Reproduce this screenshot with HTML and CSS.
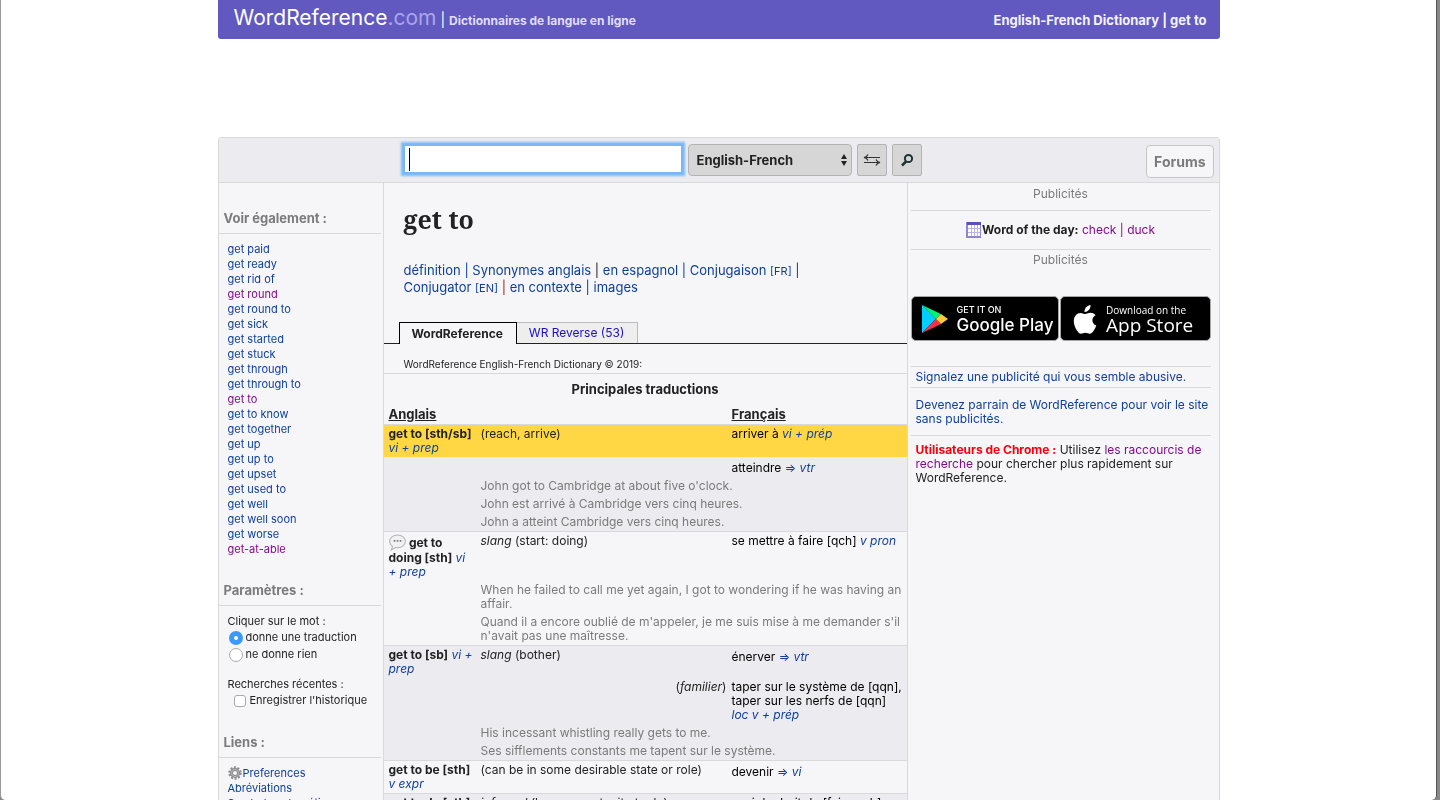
FILE: index.html
```html
<!DOCTYPE html>
<html lang="fr">
<head>
  <meta charset="UTF-8" />
  <meta name="viewport" content="width=device-width, initial-scale=1.0"/>
  <title>get to - English-French Dictionary WordReference.com</title>
  <link rel="stylesheet" href="styles.css">
</head>
<body>
  <div class="window">
    <header class="header">
      <div class="logo"><a href="#">WordReference<span class="dotcom">.com</span></a> | <span class="tagline">Dictionnaires de langue en ligne</span></div>
      <div class="page-name">English-French Dictionary | get to</div>
    </header>

    <div class="container">
      <form class="search-bar">
        <div class="search">
          <input class="search-input" type="text" aria-label="Rechercher" autofocus />
          <div class="select-wrap">
            <select class="lang" aria-label="Dictionnaire">
              <option>English-French</option>
              <option>French-English</option>
            </select>
            <svg class="select-arrows" viewBox="0 0 6 12" width="6" height="12"><path d="M3 0l3 5H0zM3 12l3-5H0z" fill="#222"/></svg>
          </div>
          <button class="icon-btn" type="button" aria-label="Inverser">
            <svg viewBox="0 0 18 14" width="18" height="14" fill="none" stroke="#333" stroke-width="1.2"><path d="M17 4.500H2M5 1.500Q4 4 1 4.500 4 5 5 7.500M1 9.500h15M13 6.500q1 2.500 4 3-3 .5-4 3"/></svg>
          </button>
          <button class="icon-btn" type="submit" aria-label="Chercher">
            <svg viewBox="0 0 14 14" width="14" height="14" fill="none" stroke="#1c3535"><circle cx="8.500" cy="5.500" r="3.600" stroke-width="2"/><path d="M6 8.500L2 12.500" stroke-width="2.500"/></svg>
          </button>
        </div>
        <a class="forums" href="#">Forums</a>
      </form>

      <div class="columns">
        <aside class="left">
          <h3>Voir également :</h3>
          <ul class="links">
            <li><a href="#">get paid</a></li>
            <li><a href="#">get ready</a></li>
            <li><a href="#">get rid of</a></li>
            <li><a class="visited" href="#">get round</a></li>
            <li><a href="#">get round to</a></li>
            <li><a href="#">get sick</a></li>
            <li><a href="#">get started</a></li>
            <li><a href="#">get stuck</a></li>
            <li><a href="#">get through</a></li>
            <li><a href="#">get through to</a></li>
            <li><a class="visited" href="#">get to</a></li>
            <li><a href="#">get to know</a></li>
            <li><a href="#">get together</a></li>
            <li><a href="#">get up</a></li>
            <li><a href="#">get up to</a></li>
            <li><a href="#">get upset</a></li>
            <li><a href="#">get used to</a></li>
            <li><a href="#">get well</a></li>
            <li><a href="#">get well soon</a></li>
            <li><a href="#">get worse</a></li>
            <li><a class="visited" href="#">get-at-able</a></li>
          </ul>

          <h3>Paramètres :</h3>
          <div class="settings">
            <p>Cliquer sur le mot :</p>
            <label class="option"><input type="radio" name="click" checked />donne une traduction</label>
            <label class="option"><input type="radio" name="click" />ne donne rien</label>
            <p class="recent">Recherches récentes :</p>
            <label class="option history"><input type="checkbox" />Enregistrer l'historique</label>
          </div>

          <h3>Liens :</h3>
          <ul class="links">
            <li><a class="prefs" href="#"><svg viewBox="0 0 14 14" width="14" height="14" fill="none" stroke="#8a8a8a"><circle cx="7" cy="7" r="5.700" stroke-width="2" stroke-dasharray="2 1.580"/><circle cx="7" cy="7" r="3.600" stroke-width="3"/><circle cx="7" cy="7" r="3.600" stroke="#b5b5b5" stroke-width="1"/></svg>Preferences</a></li>
            <li><a href="#">Abréviations</a></li>
            <li><a href="#">Symboles phonétiques</a></li>
          </ul>
        </aside>

        <main class="center">
          <h1>get to</h1>
          <p class="more">
            <a href="#">définition</a> <i>|</i> <a href="#">Synonymes anglais</a> | <a href="#">en espagnol</a> <i>|</i> <a href="#">Conjugaison <small>[FR]</small></a> <i>|</i>
            <a href="#">Conjugator <small>[EN]</small></a> <b>|</b> <a href="#">en contexte</a> <i>|</i> <a href="#">images</a>
          </p>

          <nav class="tabs">
            <a class="tab active" href="#">WordReference</a>
            <a class="tab" href="#">WR Reverse (53)</a>
          </nav>
          <p class="copyright">WordReference English-French Dictionary © 2019:</p>

          <table class="wrd">
            <colgroup>
              <col class="col-from">
              <col class="col-sense">
              <col>
            </colgroup>
            <tbody>
              <tr><th class="title" colspan="3">Principales traductions</th></tr>
              <tr class="lang-heads"><th>Anglais</th><th></th><th>Français</th></tr>
            </tbody>
            <tbody class="entry even">
              <tr class="selected">
                <td><strong>get to [sth/sb]</strong> <a class="pos" href="#">vi + prep</a></td>
                <td>(reach, arrive)</td>
                <td class="to">arriver à <a class="pos" href="#">vi + prép</a></td>
              </tr>
              <tr>
                <td></td>
                <td></td>
                <td class="to conj">atteindre <a class="pos" href="#"><span class="arrow">⇒</span> vtr</a></td>
              </tr>
              <tr><td></td><td class="example" colspan="2">John got to Cambridge at about five o'clock.</td></tr>
              <tr><td></td><td class="example" colspan="2">John est arrivé à Cambridge vers cinq heures.</td></tr>
              <tr><td></td><td class="example" colspan="2">John a atteint Cambridge vers cinq heures.</td></tr>
            </tbody>
            <tbody class="entry">
              <tr>
                <td><svg class="bubble" viewBox="0 0 16 16" width="17" height="17"><path d="M8 1C3.800 1 .6 3.500.6 6.900c0 2 1 3.600 2.700 4.700L2.200 15l4-2.200c.6.1 1.200.1 1.800.1 4.200 0 7.400-2.600 7.400-6S12.200 1 8 1z" fill="#f1f1f1" stroke="#b4b4b4"/><path d="M4.500 6.500h1.500M7.300 6.500h1.500M10.100 6.500h1.500" stroke="#777" stroke-width="1.500"/></svg> <strong>get to doing [sth]</strong> <a class="pos" href="#">vi + prep</a></td>
                <td><i>slang</i> (start: doing)</td>
                <td class="to">se mettre à faire [qch] <a class="pos" href="#">v pron</a></td>
              </tr>
              <tr><td></td><td class="example" colspan="2">When he failed to call me yet again, I got to wondering if he was having an affair.</td></tr>
              <tr><td></td><td class="example" colspan="2">Quand il a encore oublié de m'appeler, je me suis mise à me demander s'il n'avait pas une maîtresse.</td></tr>
            </tbody>
            <tbody class="entry even">
              <tr>
                <td><strong>get to [sb]</strong> <a class="pos" href="#">vi + prep</a></td>
                <td><i>slang</i> (bother)</td>
                <td class="to conj">énerver <a class="pos" href="#"><span class="arrow">⇒</span> vtr</a></td>
              </tr>
              <tr>
                <td></td>
                <td class="register">(<i>familier</i>)</td>
                <td class="to">taper sur le système de [qqn], taper sur les nerfs de [qqn] <a class="pos" href="#">loc v + prép</a></td>
              </tr>
              <tr><td></td><td class="example" colspan="2">His incessant whistling really gets to me.</td></tr>
              <tr><td></td><td class="example" colspan="2">Ses sifflements constants me tapent sur le système.</td></tr>
            </tbody>
            <tbody class="entry">
              <tr>
                <td><strong>get to be [sth]</strong> <a class="pos" href="#">v expr</a></td>
                <td>(can be in some desirable state or role)</td>
                <td class="to conj">devenir <a class="pos" href="#"><span class="arrow">⇒</span> vi</a></td>
              </tr>
            </tbody>
            <tbody class="entry even">
              <tr>
                <td><strong>get to do [sth]</strong> <a class="pos" href="#">v expr</a></td>
                <td><i>informal</i> (have opportunity to do)</td>
                <td class="to">avoir le droit de [faire qch]</td>
              </tr>
            </tbody>
          </table>
        </main>

        <aside class="right">
          <p class="ad">Publicités</p>
          <p class="word-day">
            <svg viewBox="0 0 16 18" width="16" height="18"><path d="M0 1h15v16H0z" fill="#8f88cf"/><path d="M1 1h14v3H1z" fill="#5a50bb"/><path d="M2 4h12v11H2z" fill="#fff"/><path d="M5.500 4v11M8.500 4v11M11.500 4v11M2 7.500h12M2 11.500h12" stroke="#b9b4e4"/></svg><strong>Word of the day:</strong>&nbsp;<a class="visited" href="#">check | duck</a>
          </p>
          <p class="ad second">Publicités</p>
          <div class="stores">
            <a class="store google" href="#">
              <svg viewBox="0 0 26 30" width="26" height="30"><path d="M0 1v28l14-14z" fill="#00cfff"/><path d="M0 1l14 14 5-5z" fill="#00ef76"/><path d="M0 29l14-14 5 5z" fill="#f4304a"/><path d="M19 10l7 5-7 5-5-5z" fill="#ffc93a"/></svg>
              <span><small>GET IT ON</small>Google Play</span>
            </a>
            <a class="store apple" href="#">
              <svg viewBox="0 0 24 30" width="24" height="30" fill="#fff"><path d="M17.500 1c.2 2-.6 3.700-1.700 5-1.200 1.300-2.700 2.100-4.300 2-.2-1.900.7-3.600 1.700-4.700C14.300 2.100 16 1.200 17.500 1z"/><path d="M22.500 11.200c-2 1.200-3.100 2.900-3.100 5 0 2.500 1.600 4.500 3.900 5.300-.7 2.200-1.700 4-3 5.800-1 1.400-2.100 2.400-3.600 2.400-1.600 0-2.300-.9-4.300-.9s-2.800.9-4.300.9c-1.600 0-2.700-1.200-3.800-2.800C2.200 24.200.8 20.600.8 17.200c0-5.200 3.200-8.300 6.600-8.300 1.900 0 3.400 1.200 4.700 1.200 1.200 0 3-1.300 5.200-1.300 2 0 3.900.8 5.200 2.400z"/></svg>
              <span><small>Download on the</small>App Store</span>
            </a>
          </div>
          <p class="report"><a href="#">Signalez une publicité qui vous semble abusive.</a></p>
          <p class="sponsor"><a href="#">Devenez parrain de WordReference pour voir le site sans publicités.</a></p>
          <p class="chrome"><strong>Utilisateurs de Chrome :</strong> Utilisez <a class="visited" href="#">les raccourcis de recherche</a> pour chercher plus rapidement sur WordReference.</p>
        </aside>
      </div>
    </div>
  </div>
</body>
</html>
```
FILE: styles.css
```css
* {
  box-sizing: border-box;
}

html {
  background: #888;
}

body {
  margin: 0;
  font-family: Inter, "Liberation Sans", sans-serif;
  font-size: 12px;
  line-height: 14px;
  color: #222;
}

h1, h3, p, ul {
  margin: 0;
  padding: 0;
}

a {
  color: #0d3f9b;
  text-decoration: none;
}

a.visited {
  color: #800b8c;
}

.window {
  height: 100vh;
  margin: 0 3px 0 0;
  overflow: hidden;
  background: #fff;
  border-left: 1px solid #999;
  border-right: 1px solid #555;
  border-radius: 0 0 5px 5px;
}

/* top banner */
.header {
  display: flex;
  justify-content: space-between;
  align-items: center;
  max-width: 1002px;
  height: 39px;
  margin: 0 auto 98px;
  padding: 0 13px 0 16px;
  background: #6159c0;
  border-radius: 0 0 3px 3px;
  color: #fff;
}

.logo {
  font-size: 14px;
  line-height: 24px;
}

.logo a {
  font-size: 21px;
  color: #fff;
}

.logo .dotcom {
  color: #aaa5e8;
}

.tagline {
  font-size: 12px;
  font-weight: bold;
  color: #e0def8;
}

.page-name {
  font-size: 13px;
  font-weight: bold;
  color: #f4f3ff;
}

.container {
  max-width: 1002px;
  margin: 0 auto;
  border: 1px solid #d9d9dc;
  border-radius: 3px;
  background: #f6f6f9;
}

/* search */
.search-bar {
  display: flex;
  justify-content: space-between;
  height: 45px;
  padding: 6px 5px 0 184px;
  background: #ebebf0;
  border-bottom: 1px solid #d9d9dc;
}

.search {
  display: flex;
  gap: 5px;
}

.search-input {
  width: 280px;
  height: 30px;
  padding: 0 5px;
  border: 1px solid #6fb1f0;
  outline: none;
  box-shadow: 0 0 2px 2px #7db9f5;
  font: 20px Inter, sans-serif;
  background: #fff;
}

.search-input:focus {
  border: 2px solid #7db7f3;
  caret-color: transparent;
  background: #fff linear-gradient(#000, #000) 4px center / 1px 23px no-repeat;
}

.select-wrap {
  position: relative;
}

.lang {
  appearance: none;
  width: 164px;
  height: 32px;
  padding: 0 8px;
  background: #d6d6d6;
  border: 1px solid #b4b4b4;
  border-radius: 4px;
  font: bold 13px Inter, sans-serif;
  color: #222;
}

.select-arrows {
  position: absolute;
  right: 5px;
  top: 10px;
  pointer-events: none;
}

.icon-btn {
  display: flex;
  align-items: center;
  justify-content: center;
  width: 30px;
  height: 32px;
  padding: 0;
  background: #d6d6d6;
  border: 1px solid #b4b4b4;
  border-radius: 2px;
}

.forums {
  height: 33px;
  margin-top: 1px;
  padding: 0 7px;
  background: #f6f6f9;
  border: 1px solid #c6c6c8;
  border-radius: 4px;
  font-size: 14px;
  font-weight: bold;
  line-height: 31px;
  color: #7b7b7b;
}

.columns {
  display: grid;
  grid-template-columns: 164px 1fr 311px;
}

/* left column */
.left {
  padding-top: 2px;
  font-size: 11px;
  line-height: 15px;
}

.left h3 {
  margin: 25px 2px 8px 0;
  padding: 0 0 7px 5px;
  border-bottom: 1px solid #d9d9dc;
  font-size: 13px;
  line-height: 16px;
  color: #7b7b7b;
}

.links {
  padding-left: 9px;
  list-style: none;
}

.prefs svg {
  vertical-align: -3px;
  margin-right: 1px;
}

.settings {
  padding-left: 9px;
}

.option {
  display: flex;
  align-items: center;
  height: 17px;
}

.option input {
  appearance: none;
  width: 14px;
  height: 14px;
  margin: 0 3px 0 1px;
  border: 1px solid #aaa;
  border-radius: 50%;
  background: #fff;
}

.option input:checked {
  border: 5px solid #3b99fc;
}

.recent {
  margin-top: 14px;
}

.history input {
  width: 12px;
  height: 12px;
  margin: 0 4px 0 6px;
  border-radius: 3px;
}

/* translations */
.center {
  border-left: 1px solid #d9d9dc;
  border-right: 1px solid #d9d9dc;
}

h1 {
  padding: 20px 20px 0;
  font-family: "Noto Serif", "Liberation Serif", serif;
  font-size: 25px;
  line-height: 32px;
}

.more {
  padding: 27px 100px 0 20px;
  font-size: 13px;
  line-height: 17px;
}

.more i {
  color: #0d3f9b;
  font-style: normal;
}

.more b {
  color: #a3261b;
  font-weight: normal;
}

.more small {
  font-size: 11px;
  line-height: 11px;
}

.tabs {
  display: flex;
  align-items: flex-end;
  margin-top: 26px;
  padding-left: 15px;
  border-bottom: 1px solid #222;
}

.tab {
  height: 21px;
  padding: 0 13px 0 12px;
  background: #eee;
  border: 1px solid #bbb;
  border-left: none;
  border-bottom: none;
  line-height: 20px;
  color: #1a0dc4;
}

.tab.active {
  height: 22px;
  margin-bottom: -1px;
  background: #f6f6f9;
  border: 1px solid #000;
  border-bottom: none;
  font-weight: bold;
  line-height: 22px;
  color: #222;
}

.copyright {
  padding: 13px 20px 2px;
  border-bottom: 1px solid #d9d9dc;
  font-size: 10px;
}

.wrd {
  width: 100%;
  table-layout: fixed;
  border-collapse: separate;
  border-spacing: 0;
}

.col-from {
  width: 92px;
}

.col-sense {
  width: 251px;
}

.wrd th {
  padding: 2px 0 2px 5px;
  font-size: 13px;
  line-height: 16px;
  text-align: left;
}

.wrd th.title {
  padding: 7px 0;
  text-align: center;
}

.lang-heads th {
  text-decoration: underline;
}

.wrd td {
  padding: 2px 0 2px 5px;
  vertical-align: top;
}

.entry tr:first-child td {
  border-top: 1px solid #d9d9dc;
}

.even {
  background: #ebebf0;
}

.selected {
  background: #ffd644;
}

.pos {
  font-style: italic;
}

.arrow {
  font-style: normal;
}

.wrd .to {
  color: #000;
}

.wrd .conj {
  padding-top: 4px;
}

.wrd .example {
  padding-right: 2px;
  color: #7b7b7b;
}

.wrd .register {
  text-align: right;
}

.bubble {
  vertical-align: -4px;
}

/* right column */
.right {
  padding: 0 8px 0 3px;
}

.ad {
  padding: 4px 0 9px;
  text-align: center;
  color: #7b7b7b;
}

.word-day {
  display: flex;
  align-items: center;
  justify-content: center;
  height: 40px;
  border-top: 1px solid #d9d9dc;
  border-bottom: 1px solid #d9d9dc;
}

.ad.second {
  padding: 3px 0 29px;
}

.stores {
  display: flex;
  gap: 1px;
  padding-bottom: 25px;
}

.store {
  display: flex;
  align-items: center;
  flex: 1;
  height: 45px;
  padding-left: 10px;
  background: #000;
  border: 1px solid #a6a6a6;
  border-radius: 5px;
  color: #fff;
  font-size: 17px;
  font-weight: 500;
  line-height: 18px;
  white-space: nowrap;
}

.store small {
  display: block;
  font-size: 9px;
  line-height: 12px;
}

.store svg {
  margin-right: 9px;
}

.apple {
  padding-left: 12px;
  font-family: "Open Sans", sans-serif;
  font-size: 19px;
}

.apple small {
  font-size: 10px;
}

.report {
  padding: 3px 5px;
  border-top: 1px solid #d9d9dc;
  border-bottom: 1px solid #d9d9dc;
}

.sponsor {
  padding: 10px 0 9px 5px;
  border-bottom: 1px solid #d9d9dc;
}

.chrome {
  padding: 7px 0 0 5px;
}

.chrome strong {
  color: #f8000f;
}
```
